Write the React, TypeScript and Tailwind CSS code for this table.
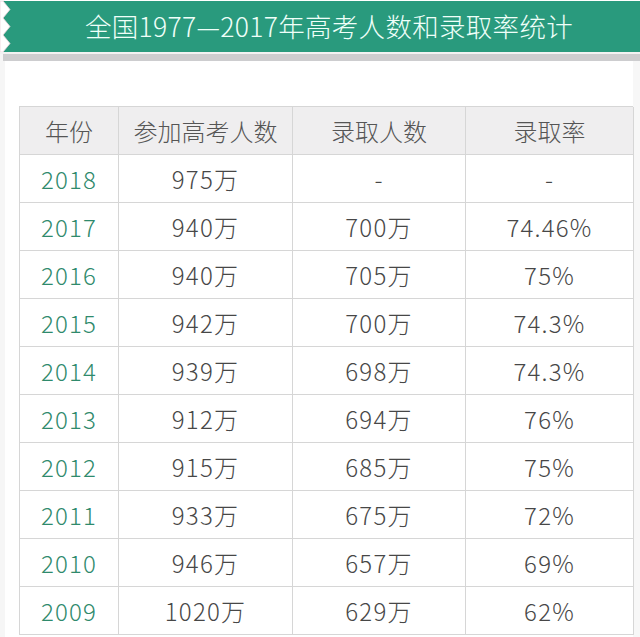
import React from "react";

const rows: [string, string, string, string][] = [
  ["2018", "975万", "-", "-"],
  ["2017", "940万", "700万", "74.46%"],
  ["2016", "940万", "705万", "75%"],
  ["2015", "942万", "700万", "74.3%"],
  ["2014", "939万", "698万", "74.3%"],
  ["2013", "912万", "694万", "76%"],
  ["2012", "915万", "685万", "75%"],
  ["2011", "933万", "675万", "72%"],
  ["2010", "946万", "657万", "69%"],
  ["2009", "1020万", "629万", "62%"],
];

const font = { fontFamily: '"Noto Sans CJK SC", "Noto Sans", sans-serif' };

export default function App() {
  return (
    <div className="w-[640px] h-[637px] bg-white overflow-hidden relative font-light" style={font}>
      {/* faint side strips */}
      <div className="absolute left-0 top-0 w-[5px] h-full bg-[#f6f6f6]" />
      <div className="absolute right-0 top-[60px] w-[7px] h-full bg-[#f7f7f7]" />

      {/* banner */}
      <div className="pt-[1px] relative">
        <div className="h-[51px] bg-[#299a7d] flex items-center justify-center pl-[18px] relative">
          <span className="text-[26.5px] leading-none text-[#effff9] tracking-[0.3px]">
            全国1977—2017年高考人数和录取率统计
          </span>
          <svg className="absolute left-0 top-0" width="12" height="51" viewBox="0 0 12 51">
            <polygon
              points="0,0 3,0 10,8.5 3,17 10,25.5 3,34 10,42.5 3,51 0,51"
              fill="#ffffff"
              stroke="#ecd3da"
              strokeWidth="0.8"
            />
          </svg>
        </div>
        <div className="h-[2px] bg-[#f2f2f2]" />
        <div className="h-[7px] bg-[#cdcdcf] ml-[3px]" />
      </div>

      {/* table */}
      <div className="relative ml-[19px] mt-[45px] w-[614px] border-t border-l border-[#d6d6d6]">
        <div className="grid grid-cols-[99px_174px_173px_168px] h-[48px] bg-[#efeeef] text-[#555555] text-[24px]">
          <div className="flex items-center justify-center border-r border-b border-[#d6d6d6]">年份</div>
          <div className="flex items-center justify-center border-r border-b border-[#d6d6d6]">参加高考人数</div>
          <div className="flex items-center justify-center border-r border-b border-[#d6d6d6]">录取人数</div>
          <div className="flex items-center justify-center border-r border-b border-[#d6d6d6]">录取率</div>
        </div>
        {rows.map((r) => (
          <div
            key={r[0]}
            className="grid grid-cols-[99px_174px_173px_168px] h-[48px] bg-white text-[24px] text-[#474747]"
          >
            <div className="flex items-center justify-center border-r border-b border-[#d6d6d6] text-[#2f8a6c] tracking-[1.2px]">
              {r[0]}
            </div>
            <div className="flex items-center justify-center border-r border-b border-[#d6d6d6] tracking-[1.2px]">{r[1]}</div>
            <div className="flex items-center justify-center border-r border-b border-[#d6d6d6] tracking-[1.2px]">{r[2]}</div>
            <div className="flex items-center justify-center border-r border-b border-[#d6d6d6] tracking-[1.2px]">{r[3]}</div>
          </div>
        ))}
      </div>
    </div>
  );
}
